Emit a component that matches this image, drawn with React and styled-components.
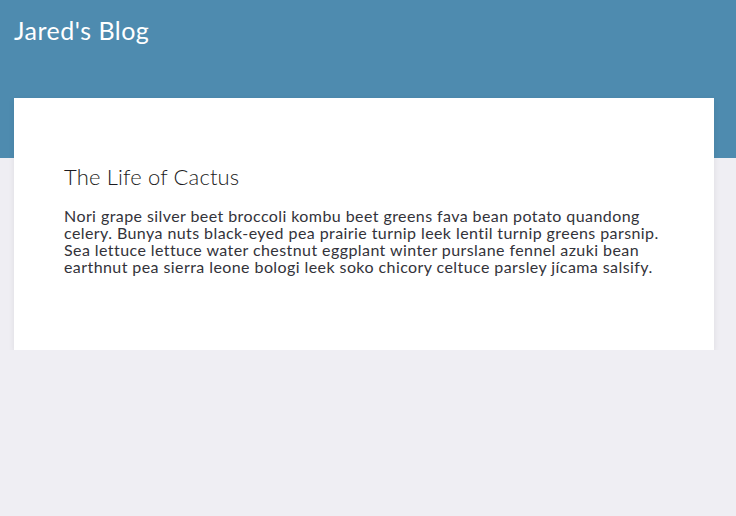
import React from 'react'
import styled, { createGlobalStyle } from 'styled-components'

const GlobalStyle = createGlobalStyle`
  html, body {
    margin: 0;
    padding: 0;
    background: #efeef3;
    font-family: 'Lato', 'Open Sans', sans-serif;
    color: #222;
  }
`

const Header = styled.header`
  background: #4e8baf;
  height: 158px;
  padding: 15px 14px 0;
  box-sizing: border-box;
`

const SiteTitle = styled.h1`
  margin: 0;
  font-size: 25px;
  font-weight: 400;
  line-height: 30px;
  letter-spacing: 0.5px;
  color: #fff;
`

const Main = styled.main`
  padding: 0 22px 0 14px;
  margin-top: -60px;
`

const Card = styled.article`
  background: #fff;
  box-shadow: 0 2px 6px rgba(0, 0, 0, 0.08);
  padding: 64px 50px 59px;
`

const PostTitle = styled.h2`
  margin: 0 0 15px;
  font-size: 22px;
  font-weight: 300;
  line-height: 30px;
  letter-spacing: 0.15px;
  color: #1c1c22;
`

const PostBody = styled.p`
  margin: 0 0 16px;
  font-size: 16px;
  line-height: 17px;
  max-width: 600px;
  letter-spacing: 0.42px;
  font-weight: 400;
  color: #33333a;
`

export default function App() {
  return (
    <>
      <GlobalStyle />
      <Header>
        <SiteTitle>Jared's Blog</SiteTitle>
      </Header>
      <Main>
        <Card>
          <PostTitle>The Life of Cactus</PostTitle>
          <PostBody>
            Nori grape silver beet broccoli kombu beet greens fava bean potato
            quandong celery. Bunya nuts black-eyed pea prairie turnip leek lentil
            turnip greens parsnip. Sea lettuce lettuce water chestnut eggplant
            winter purslane fennel azuki bean earthnut pea sierra leone bologi
            leek soko chicory celtuce parsley jícama salsify.
          </PostBody>
        </Card>
      </Main>
    </>
  )
}
